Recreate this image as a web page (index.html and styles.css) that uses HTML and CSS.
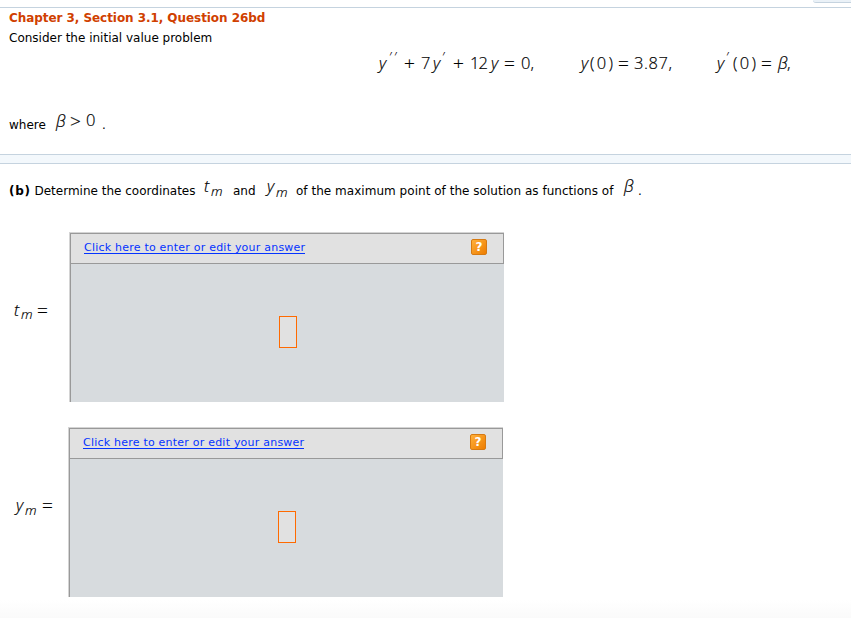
FILE: index.html
```
<!DOCTYPE html>
<html lang="en">
<head>
  <meta charset="UTF-8">
  <title>Chapter 3, Section 3.1, Question 26bd</title>
  <link rel="stylesheet" href="styles.css">
</head>
<body>
  <div class="toolbar"><div class="tab"></div></div>

  <div class="question">
    <h1 class="title">Chapter 3, Section 3.1, Question 26bd</h1>
    <p class="intro">Consider the initial value problem</p>
    <svg class="math equation" width="430" height="30">
      <text class="var" x="3" y="20">y</text>
      <text class="prime" x="13" y="12">′</text>
      <text class="prime" x="18" y="12">′</text>
      <text class="op" x="28" y="21">+</text>
      <text x="45" y="20">7</text>
      <text class="var" x="57" y="20">y</text>
      <text class="prime" x="66" y="12">′</text>
      <text class="op" x="77" y="21">+</text>
      <text x="94" y="20" textLength="18">12</text>
      <text class="var" x="115" y="20">y</text>
      <text class="op" x="128" y="21">=</text>
      <text x="145" y="20">0,</text>
      <text class="var" x="205" y="20">y</text>
      <text x="214" y="20" textLength="23">(0)</text>
      <text class="op" x="242" y="21">=</text>
      <text x="258" y="20" textLength="38">3.87,</text>
      <text class="var" x="341" y="20">y</text>
      <text class="prime" x="350" y="12">′</text>
      <text x="357" y="20" textLength="23">(0)</text>
      <text class="op" x="385" y="21">=</text>
      <text class="var" x="402" y="20">β</text>
      <text x="411" y="20">,</text>
    </svg>
    <p class="line where">
      <span class="w-where">where</span>
      <svg class="math" width="48" height="24">
        <text class="var" x="2" y="14">β</text>
        <text class="op" x="16" y="15">&gt;</text>
        <text x="32" y="13">0</text>
      </svg>
      <span>.</span>
    </p>
  </div>

  <div class="divider"></div>

  <div class="part">
    <p class="line">
      <span class="w-coords"><b class="letter">(b)</b> Determine the coordinates</span>
      <svg class="math w-t" width="30" height="24">
        <text class="var" x="1" y="13">t</text>
        <text class="sub" x="8" y="17">m</text>
      </svg>
      <span class="w-and">and</span>
      <svg class="math w-y" width="30" height="24">
        <text class="var" x="1" y="13">y</text>
        <text class="sub" x="10" y="18">m</text>
      </svg>
      <span class="w-of">of the maximum point of the solution as functions of</span>
      <svg class="math" width="16" height="24">
        <text class="var" x="2" y="13">β</text>
      </svg>
      <span>.</span>
    </p>

    <div class="answer">
      <svg class="math label" width="55" height="24">
        <text class="var" x="5" y="14">t</text>
        <text class="sub" x="12" y="17">m</text>
        <text class="op" x="28" y="15">=</text>
      </svg>
      <div class="panel">
        <div class="panel-head">
          <a class="edit" href="#">Click here to enter or edit your answer</a>
          <span class="help">?</span>
        </div>
        <div class="panel-body"><div class="box"></div></div>
      </div>
    </div>

    <div class="answer second">
      <svg class="math label" width="55" height="24">
        <text class="var" x="7" y="14">y</text>
        <text class="sub" x="16" y="18">m</text>
        <text class="op" x="33" y="15">=</text>
      </svg>
      <div class="panel">
        <div class="panel-head">
          <a class="edit" href="#">Click here to enter or edit your answer</a>
          <span class="help">?</span>
        </div>
        <div class="panel-body"><div class="box"></div></div>
      </div>
    </div>
  </div>
</body>
</html>
```
FILE: styles.css
```
* {
  box-sizing: border-box;
}
body {
  margin: 0;
  height: 618px;
  overflow: hidden;
  background: linear-gradient(#fff 600px, #fafafa 618px);
  color: #000;
  font-family: "DejaVu Sans", Verdana, sans-serif;
  font-size: 12px;
  line-height: 16px;
}
p {
  margin: 0;
}
.toolbar {
  height: 8px;
  display: flex;
  justify-content: flex-end;
  align-items: flex-start;
  border-bottom: 1px solid #c5d3df;
}
.tab {
  width: 38px;
  height: 3px;
  background: #eaf1f7;
  border-bottom: 1px solid #c5d3df;
  border-bottom-left-radius: 3px;
}
.question {
  height: 146px;
  padding: 2px 9px 0;
}
.title {
  margin: 0;
  width: max-content;
  color: #d04000;
  font-size: 12px;
  font-weight: bold;
  letter-spacing: -0.06px;
  line-height: 16px;
}
.intro {
  margin-top: 4px;
}
.math {
  display: block;
  flex: none;
  overflow: visible;
  font-family: "Open Sans", "Noto Sans", sans-serif;
  font-size: 16.5px;
  font-weight: 300;
  stroke: #000;
  stroke-width: 0.2px;
}
.var {
  font-style: italic;
}
.sub {
  font-size: 13.5px;
  font-style: italic;
}
.prime {
  font-size: 12px;
  font-style: italic;
}
.op {
  font-size: 19px;
}
.equation {
  margin: 3px 0 0 367px;
}
.line {
  display: flex;
  align-items: center;
  height: 24px;
  white-space: nowrap;
}
.where {
  margin-top: 34px;
}
.w-where {
  width: 45px;
}
.divider {
  height: 10px;
  background: #f3f8fc;
  border-top: 1px solid #c5d3df;
  border-bottom: 1px solid #c5d3df;
}
.part {
  padding: 15px 9px 0;
}
.w-coords {
  width: 194px;
}
.letter {
  letter-spacing: 0.7px;
}
.w-and {
  width: 33px;
}
.w-of {
  width: 326px;
  letter-spacing: 0.03px;
}
.answer {
  display: flex;
  align-items: center;
  margin-top: 29px;
}
.second {
  margin-top: 25px;
}
.label {
  margin-top: -6px;
}
.panel {
  width: 435px;
  height: 170px;
  margin-left: 5px;
  background: #d7dbde;
  border-top: 1px solid #d4d4d4;
  border-left: 1px solid #d4d4d4;
}
.second .panel {
  margin-left: 4px;
}
.panel-head {
  display: flex;
  align-items: center;
  justify-content: space-between;
  height: 31px;
  padding: 0 16px 2px 13px;
  background: #e1e1e1;
  border: 1px solid #999;
}
.edit {
  height: 13px;
  color: #0433ff;
  font-size: 11px;
  letter-spacing: 0.22px;
  line-height: 13px;
  text-decoration: none;
  border-bottom: 1px solid #0433ff;
}
.help {
  width: 16px;
  height: 16px;
  margin-bottom: 1px;
  background: linear-gradient(135deg, #ffb03a, #ee7d00);
  border: 1px solid #d67a12;
  border-radius: 2px;
  color: #fff;
  font-size: 12px;
  font-weight: bold;
  line-height: 14px;
  text-align: center;
}
.panel-body {
  height: 138px;
  padding: 52px 0 0 208px;
  border-left: 1px solid #999;
}
.box {
  width: 18px;
  height: 32px;
  background: #e1e1e1;
  border: 1px solid #ff6a00;
}
```
